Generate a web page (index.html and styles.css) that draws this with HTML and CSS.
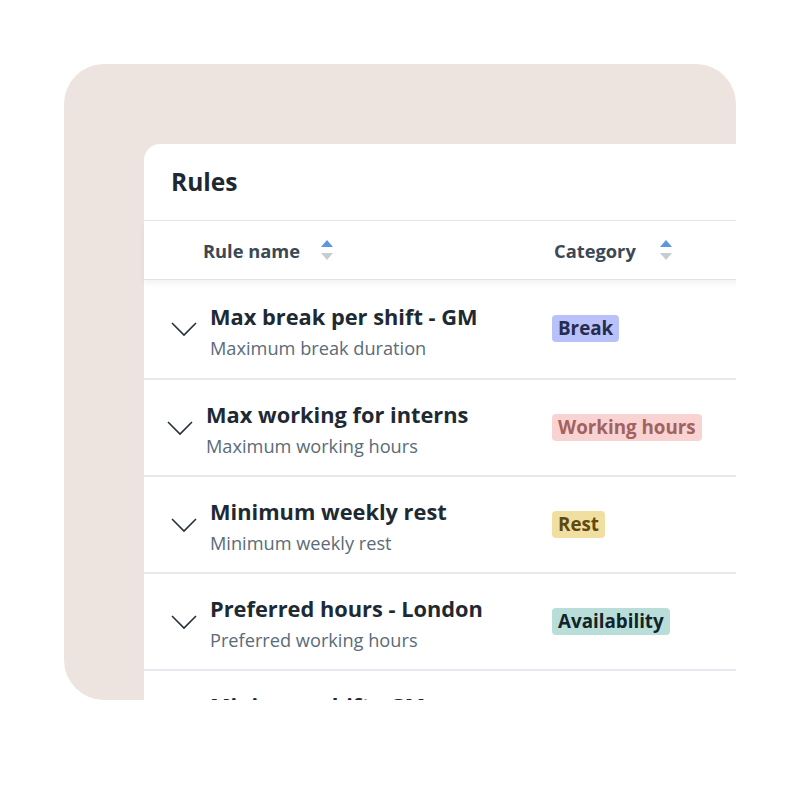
FILE: index.html
```html
<!DOCTYPE html>
<html>
<head>
<meta charset="utf-8">
<link rel="stylesheet" href="styles.css">
</head>
<body>
<div class="stage">
  <div class="panel">
    <div class="card">
      <div class="card-header">Rules</div>
      <div class="table-head">
        <div class="th th-name">Rule name
          <svg class="sort" width="12" height="22" viewBox="0 0 12 22"><path d="M6 0 L12 7 L0 7 Z" fill="#5f95e4"/><path d="M0 13 L12 13 L6 20 Z" fill="#c6cdd1"/></svg>
        </div>
        <div class="th th-cat">Category
          <svg class="sort" width="12" height="22" viewBox="0 0 12 22"><path d="M6 0 L12 7 L0 7 Z" fill="#5f95e4"/><path d="M0 13 L12 13 L6 20 Z" fill="#c6cdd1"/></svg>
        </div>
      </div>
      <div class="row row-first">
        <div class="name-cell">
          <svg class="chev" width="26" height="16" viewBox="0 0 26 16"><path d="M1 2 L13 14 L25 2" fill="none" stroke="#26313b" stroke-width="1.6"/></svg>
          <div class="text">
            <div class="title">Max break per shift - GM</div>
            <div class="sub">Maximum break duration</div>
          </div>
        </div>
        <div class="cat-cell"><span class="badge b-break">Break</span></div>
      </div>
      <div class="row row-shift">
        <div class="name-cell">
          <svg class="chev" width="26" height="16" viewBox="0 0 26 16"><path d="M1 2 L13 14 L25 2" fill="none" stroke="#26313b" stroke-width="1.6"/></svg>
          <div class="text">
            <div class="title">Max working for interns</div>
            <div class="sub">Maximum working hours</div>
          </div>
        </div>
        <div class="cat-cell"><span class="badge b-work">Working hours</span></div>
      </div>
      <div class="row">
        <div class="name-cell">
          <svg class="chev" width="26" height="16" viewBox="0 0 26 16"><path d="M1 2 L13 14 L25 2" fill="none" stroke="#26313b" stroke-width="1.6"/></svg>
          <div class="text">
            <div class="title">Minimum weekly rest</div>
            <div class="sub">Minimum weekly rest</div>
          </div>
        </div>
        <div class="cat-cell"><span class="badge b-rest">Rest</span></div>
      </div>
      <div class="row">
        <div class="name-cell">
          <svg class="chev" width="26" height="16" viewBox="0 0 26 16"><path d="M1 2 L13 14 L25 2" fill="none" stroke="#26313b" stroke-width="1.6"/></svg>
          <div class="text">
            <div class="title">Preferred hours - London</div>
            <div class="sub">Preferred working hours</div>
          </div>
        </div>
        <div class="cat-cell"><span class="badge b-avail">Availability</span></div>
      </div>
      <div class="row">
        <div class="name-cell">
          <svg class="chev" width="26" height="16" viewBox="0 0 26 16"><path d="M1 2 L13 14 L25 2" fill="none" stroke="#26313b" stroke-width="1.6"/></svg>
          <div class="text">
            <div class="title">Minimum shift - GM</div>
            <div class="sub">Minimum shift length</div>
          </div>
        </div>
        <div class="cat-cell"><span class="badge b-work">Working hours</span></div>
      </div>
    </div>
  </div>
</div>
</body>
</html>
```

FILE: styles.css
```css
* { box-sizing: border-box; }
html, body { margin: 0; padding: 0; background: #ffffff; }
body { font-family: "Open Sans", "Noto Sans", sans-serif; }

.stage { padding: 64px; }

.panel {
  width: 672px;
  height: 636px;
  background: #eee4df;
  border-radius: 40px 40px 0 40px;
  overflow: hidden;
  padding: 80px 0 0 80px;
}

.card {
  width: 720px;
  background: #ffffff;
  border-radius: 16px 0 0 0;
}

.card-header {
  height: 77px;
  padding: 21px 0 0 27px;
  font-size: 24.5px;
  font-weight: 700;
  color: #1d2832;
  border-bottom: 1px solid #e2e6ea;
}

.table-head {
  display: grid;
  grid-template-columns: 408px 1fr;
  height: 59px;
  align-items: center;
  border-bottom: 1px solid #dfe3e7;
  box-shadow: 0 3px 6px rgba(30, 40, 60, 0.06);
  position: relative;
}

.th {
  display: flex;
  align-items: center;
  font-size: 18.3px;
  font-weight: 700;
  color: #3b4855;
}
.th-name { padding-left: 59px; gap: 21px; }
.th-cat { padding-left: 2px; gap: 24px; }
.sort { display: block; margin-top: 1px; }

.row {
  display: grid;
  grid-template-columns: 408px 1fr;
  height: 97px;
  align-items: center;
  border-bottom: 2px solid #e6e9ed;
}
.row-first { height: 100px; }

.name-cell {
  display: flex;
  align-items: center;
  padding-left: 27px;
  gap: 13px;
}
.row-shift .name-cell { padding-left: 23px; gap: 13px; }

.chev { display: block; flex: none; }

.text { margin-top: 6px; }
.title {
  font-size: 21.8px;
  font-weight: 700;
  color: #1e2a33;
  line-height: 26px;
}
.sub {
  font-size: 18.2px;
  color: #5a6b79;
  line-height: 26px;
  margin-top: 5px;
}

.cat-cell { display: flex; align-items: center; }

.badge {
  display: inline-block;
  font-size: 18.8px;
  font-weight: 700;
  line-height: 27px;
  padding: 0 6px;
  border-radius: 4px;
  margin-top: -1px;
}
.b-break { background: #b8c1fa; color: #262b50; }
.b-work { background: #f9d3d2; color: #a3615f; }
.b-rest { background: #f1dfa2; color: #5e4a10; }
.b-avail { background: #b9ded9; color: #10242a; }
```
